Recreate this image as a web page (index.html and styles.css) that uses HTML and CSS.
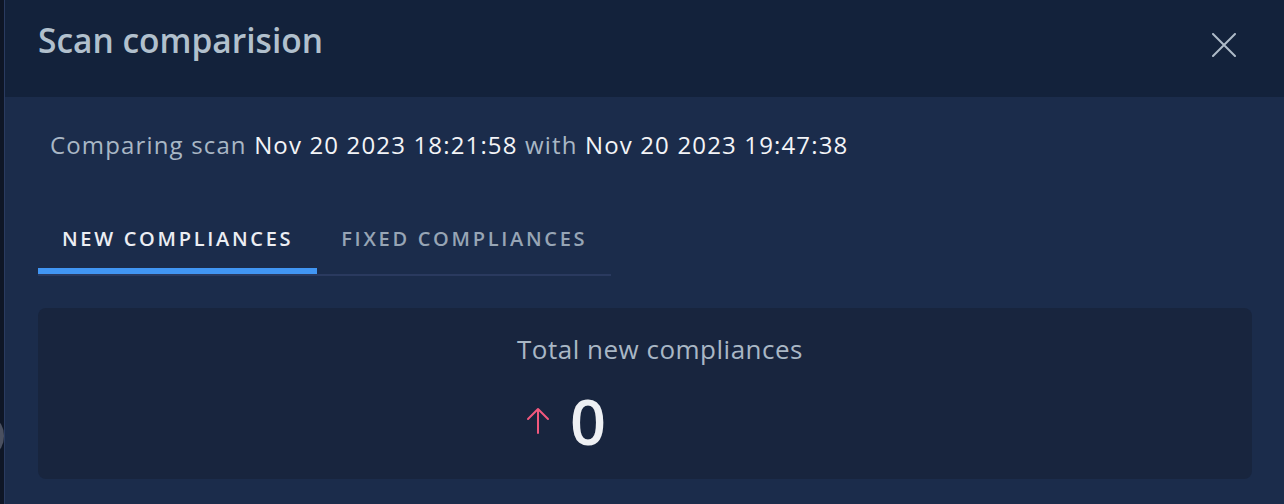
FILE: index.html
```html
<!DOCTYPE html>
<html>
<head>
<meta charset="utf-8">
<link rel="stylesheet" href="styles.css">
</head>
<body>
<div class="page">
  <div class="backdrop"><span class="blob"></span></div>
  <div class="modal">
    <header class="modal-header">
      <h1 class="title">Scan comparision</h1>
      <button class="close" aria-label="Close">
        <svg width="24" height="24" viewBox="0 0 24 24"><path d="M1 1 L23 23 M23 1 L1 23" stroke="#aebbc8" stroke-width="2" stroke-linecap="round"/></svg>
      </button>
    </header>
    <section class="modal-body">
      <p class="compare">Comparing scan <span class="hl">Nov 20 2023 18:21:58</span> with <span class="hl">Nov 20 2023 19:47:38</span></p>
      <nav class="tabs">
        <div class="tab active">NEW COMPLIANCES</div>
        <div class="tab">FIXED COMPLIANCES</div>
      </nav>
      <div class="card">
        <div class="card-label">Total new compliances</div>
        <div class="card-value">
          <svg class="arrow" width="24" height="28" viewBox="0 0 24 28"><path d="M12 26 V2 M2 12 L12 2 L22 12" fill="none" stroke="#f2587d" stroke-width="2" stroke-linecap="round" stroke-linejoin="round"/></svg>
          <span class="num">0</span>
        </div>
      </div>
    </section>
  </div>
</div>
</body>
</html>
```
FILE: styles.css
```css
* { box-sizing: border-box; }
html, body { margin: 0; padding: 0; }
body {
  background: #0e1626;
  font-family: "Open Sans", "Noto Sans", sans-serif;
  width: 1284px;
  height: 504px;
  overflow: hidden;
}
.page {
  display: flex;
  height: 504px;
}
.backdrop {
  width: 4px;
  flex: 0 0 4px;
  position: relative;
  background: #0e1626;
}
.blob {
  position: absolute;
  left: -14px;
  top: 420px;
  width: 18px;
  height: 32px;
  border-radius: 50%;
  background: #4a5060;
}
.modal {
  flex: 1;
  border-left: 1px solid #2a3b60;
  background: #1b2c4b;
  display: flex;
  flex-direction: column;
}
.modal-header {
  height: 97px;
  background: #13223b;
  display: flex;
  align-items: flex-start;
  justify-content: space-between;
  padding: 0 48px 0 33px;
}
.title {
  margin: 17px 0 0;
  font-size: 33.5px;
  font-weight: 600;
  color: #b1c0cd;
  letter-spacing: 0;
}
.close {
  background: none;
  border: 0;
  padding: 0;
  margin-top: 33px;
  width: 24px;
  height: 24px;
  cursor: pointer;
}
.close svg { display: block; }
.modal-body {
  padding: 0 32px 0 33px;
}
.compare {
  margin: 30px 0 0 12px;
  font-size: 24px;
  letter-spacing: 1.15px;
  color: #a9b7c5;
  line-height: 36px;
}
.hl { color: #f3f4f7; }
.tabs {
  display: flex;
  margin-top: 52px;
}
.tab {
  padding: 0 24px;
  height: 61px;
  line-height: 48px;
  font-size: 20px;
  font-weight: 600;
  letter-spacing: 2.7px;
  color: #97a5b5;
  border-bottom: 2px solid #2a3a5f;
  position: relative;
}
.tab.active {
  color: #eceef3;
}
.tab.active::after {
  content: "";
  position: absolute;
  left: 0;
  right: 0;
  bottom: 0;
  height: 6px;
  background: #4196f3;
}
.card {
  margin-top: 32px;
  height: 171px;
  background: #18253e;
  border-radius: 8px;
  display: flex;
  flex-direction: column;
  align-items: flex-start;
  padding: 25px 0 0 479px;
}
.card-label {
  font-size: 26px;
  letter-spacing: 0.5px;
  color: #a9b7c5;
  line-height: 32px;
}
.card-value {
  display: flex;
  align-items: center;
  margin-top: 24px;
  margin-left: 9px;
}
.arrow { margin-right: 20px; }
.num {
  font-size: 63px;
  font-weight: 600;
  color: #eef0f3;
  line-height: 63px;
}
```
